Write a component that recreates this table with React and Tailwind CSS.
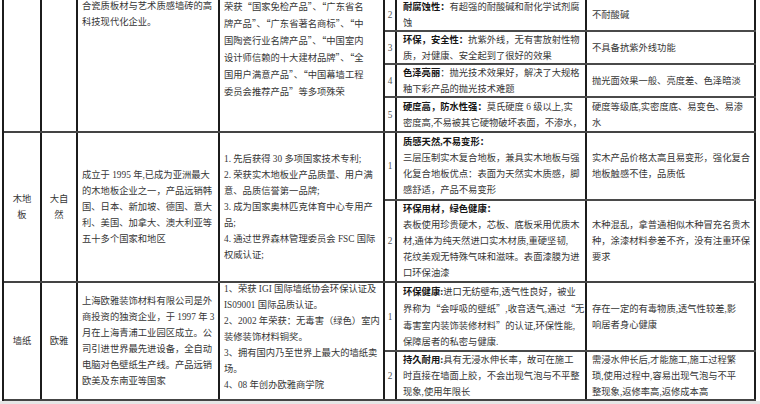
import React from "react";

// wide CJK quotes: Liberation Serif would draw them narrow, so hand them to the CJK font
const q = (s) =>
  s.split(/([“”])/).map((p, i) =>
    p === "“" || p === "”" ? (
      <span key={i} className="font-['Noto_Sans_CJK_SC',sans-serif]">
        {p}
      </span>
    ) : (
      p
    )
  );

// one cell's text, broken into the lines of the reference
const Lines = ({ lines, className = "" }) => (
  <div className={className}>
    {lines.map((l, i) => (
      <div key={i} className="whitespace-nowrap">
        {typeof l === "string" ? q(l) : l}
      </div>
    ))}
  </div>
);

const B = ({ children }) => <span className="font-bold text-[#151515]">{children}</span>;

// a feature row in the right part: number, merit, weakness
const Sub = ({ h, n, feature, weak, last }) => (
  <div className={`flex ${h} ${last ? "" : "border-b-2 border-b-[#4a4a4a]"}`}>
    <div className="flex w-[12px] items-center justify-center border-r-2 border-r-[#1c1c1c] text-[#555]">
      {n}
    </div>
    <div className="flex w-[190px] flex-col justify-center border-r-2 border-r-[#1c1c1c] pl-[6px]">
      <Lines lines={feature} />
    </div>
    <div className="flex w-[169px] flex-col justify-center border-r-2 border-r-[#1c1c1c] pl-[5px]">
      <Lines lines={weak} />
    </div>
  </div>
);

const Row = ({ h, cat, brand, intro, honors, introTop, honorsTop, children }) => (
  <div className={`flex ${h} border-b-2 border-b-[#444]`}>
    <div className="flex w-[38px] items-center justify-center border-r-2 border-r-[#1c1c1c] text-center">
      <Lines lines={cat} />
    </div>
    <div className="flex w-[36px] items-center justify-center border-r-2 border-r-[#1c1c1c] text-center">
      <Lines lines={brand} />
    </div>
    <div
      className={`flex w-[142px] flex-col border-r-2 border-r-[#1c1c1c] pl-[4px] ${
        introTop ? "justify-start" : "justify-center"
      }`}
    >
      <Lines lines={intro} className={introTop ? "-mt-[2px]" : ""} />
    </div>
    <div
      className={`flex w-[165px] flex-col border-r-2 border-r-[#1c1c1c] pl-[4px] ${
        honorsTop ? "justify-start" : "justify-center"
      }`}
    >
      <Lines lines={honors} className={honorsTop ? "-mt-[2px]" : ""} />
    </div>
    <div className="flex w-[371px] flex-col">{children}</div>
  </div>
);

export default function App() {
  return (
    <div className="h-[404px] w-[760px] overflow-hidden bg-white pl-[2px] font-['Liberation_Serif','Noto_Sans_CJK_SC',serif] text-[9.3px] leading-[16px] text-[#363636]">
      <div className="w-[754px] border-l-2 border-l-[#1c1c1c]">
        {/* 瓷砖 (row continues from the page above) */}
        <Row
          h="h-[133px]"
          cat={[]}
          brand={[]}
          introTop
          honorsTop
          intro={["合瓷质板材与艺术质感墙砖的高", "科技现代化企业。"]}
          honors={[
            "荣获“国家免检产品”、“广东省名",
            "牌产品”、“广东省著名商标”、“中",
            "国陶瓷行业名牌产品”、“中国室内",
            "设计师信赖的十大建材品牌”、“全",
            "国用户满意产品”、“中国幕墙工程",
            "委员会推荐产品”等多项殊荣",
          ]}
        >
          <Sub
            h="h-[32px]"
            n="2"
            feature={[<><B>耐腐蚀性：</B>有超强的耐酸碱和耐化学试剂腐</>, "蚀"]}
            weak={["不耐酸碱"]}
          />
          <Sub
            h="h-[33px]"
            n="3"
            feature={[<><B>环保，安全性：</B>抗紫外线，无有害放射性物</>, "质，对健康、安全起到了很好的效果"]}
            weak={["不具备抗紫外线功能"]}
          />
          <Sub
            h="h-[33px]"
            n="4"
            feature={[<><B>色泽亮丽</B>：抛光技术效果好，解决了大规格</>, "釉下彩产品的抛光技术难题"]}
            weak={["抛光面效果一般、亮度差、色泽暗淡"]}
          />
          <Sub
            h="h-[33px]"
            n="5"
            last
            feature={[<><B>硬度高，防水性强：</B>莫氏硬度 6 级以上,实</>, "密度高,不易被其它硬物破坏表面，不渗水，"]}
            weak={["硬度等级底,实密度底、易变色、易渗", "水"]}
          />
        </Row>

        {/* 木地板 */}
        <Row
          h="h-[150px]"
          cat={["木地", "板"]}
          brand={["大自", "然"]}
          intro={[
            "成立于 1995 年,已成为亚洲最大",
            "的木地板企业之一，产品远销韩",
            "国、日本、新加坡、德国、意大",
            "利、美国、加拿大、澳大利亚等",
            "五十多个国家和地区",
          ]}
          honors={[
            "1. 先后获得 30 多项国家技术专利;",
            "2. 荣获实木地板业产品质量、用户满",
            "意、品质信誉第一品牌;",
            "3. 成为国家奥林匹克体育中心专用产",
            "品;",
            "4. 通过世界森林管理委员会 FSC 国际",
            "权威认证;",
          ]}
        >
          <Sub
            h="h-[68px]"
            n="1"
            feature={[
              <B>质感天然,不易变形：</B>,
              "三层压制实木复合地板，兼具实木地板与强",
              "化复合地板优点：表面为天然实木质感，脚",
              "感舒适，产品不易变形",
            ]}
            weak={["实木产品价格太高且易变形，强化复合", "地板触感不佳，品质低"]}
          />
          <Sub
            h="h-[80px]"
            n="2"
            last
            feature={[
              <B>环保用材，绿色健康：</B>,
              "表板使用珍贵硬木，芯板、底板采用优质木",
              "材,通体为纯天然进口实木材质,重硬坚韧,",
              "花纹美观无特殊气味和滋味。表面漆膜为进",
              "口环保油漆",
            ]}
            weak={["木种混乱，拿普通相似木种冒充名贵木", "种，涂漆材料参差不齐，没有注重环保", "要求"]}
          />
        </Row>

        {/* 墙纸 */}
        <Row
          h="h-[118px]"
          cat={["墙纸"]}
          brand={["欧雅"]}
          honorsTop
          intro={[
            "上海欧雅装饰材料有限公司是外",
            "商投资的独资企业，于 1997 年 3",
            "月在上海青浦工业园区成立。公",
            "司引进世界最先进设备，全自动",
            "电脑对色壁纸生产线。产品远销",
            "欧美及东南亚等国家",
          ]}
          honors={[
            "1、荣获 IGI 国际墙纸协会环保认证及",
            "IS09001 国际品质认证。",
            "2、2002 年荣获：无毒害（绿色）室内",
            "装修装饰材料铜奖。",
            "3、拥有国内乃至世界上最大的墙纸卖",
            "场。",
            "4、08 年创办欧雅商学院",
          ]}
        >
          <Sub
            h="h-[69px]"
            n="1"
            feature={[
              <><B>环保健康:</B>进口无纺壁布,透气性良好，被业</>,
              "界称为“会呼吸的壁纸”,收音透气,通过“无",
              "毒害室内装饰装修材料”的认证,环保性能,",
              "保障居者的私密与健康.",
            ]}
            weak={["存在一定的有毒物质,透气性较差,影", "响居者身心健康"]}
          />
          <Sub
            h="h-[47px]"
            n="2"
            last
            feature={[
              <><B>持久耐用:</B>具有无浸水伸长率，故可在施工</>,
              "时直接在墙面上胶，不会出现气泡与不平整",
              "现象,使用年限长",
            ]}
            weak={["需浸水伸长后,才能施工,施工过程繁", "琐,使用过程中,容易出现气泡与不平", "整现象,返修率高,返修成本高"]}
          />
        </Row>
      </div>
      <div className="-ml-[2px] h-[3px] bg-[#e6e6e6]" />
    </div>
  );
}
